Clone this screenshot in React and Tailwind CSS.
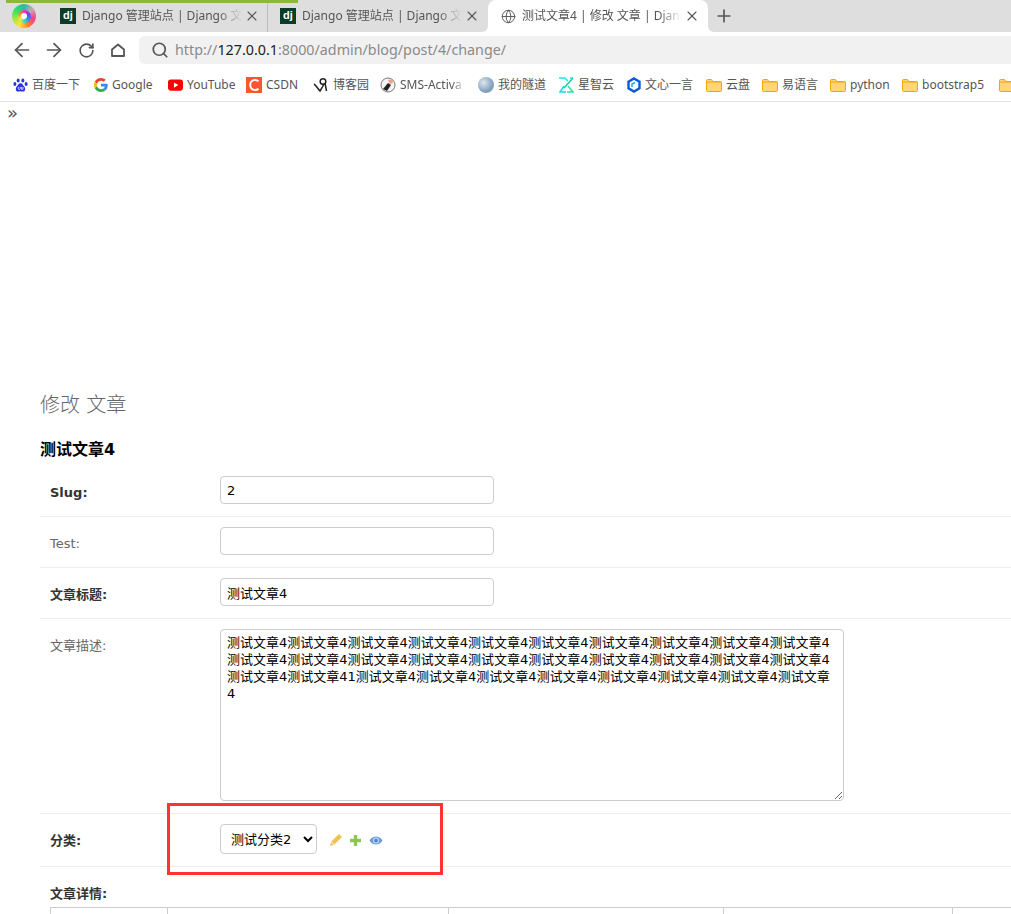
import React from 'react'
import { ArrowLeft, ArrowRight, RotateCw, Search, X, Plus, Globe } from 'lucide-react'

const Folder = () => (
    <svg width="16" height="16" viewBox="0 0 16 16" className="shrink-0">
        <path d="M.5 3.500a1 1 0 0 1 1-1h4l1.500 2h7.500a1 1 0 0 1 1 1v8a1 1 0 0 1-1 1h-13a1 1 0 0 1-1-1z" fill="#ffd577" stroke="#f2a60c" />
        <path d="M1 5h14" stroke="#f2a60c" />
    </svg>
)

const Baidu = () => (
    <svg width="15" height="16" viewBox="0 0 16 16" className="shrink-0" fill="#2932e1">
        <ellipse cx="5.500" cy="3.200" rx="1.600" ry="2.200" />
        <ellipse cx="10.500" cy="3.200" rx="1.600" ry="2.200" />
        <ellipse cx="2" cy="7" rx="1.600" ry="2.100" />
        <ellipse cx="14" cy="7" rx="1.600" ry="2.100" />
        <path d="M8 6c-2 0-2.500 2-4 3.500S2.500 15 5.500 15c1 0 1.500-.4 2.500-.4s1.500.4 2.500.4c3 0 3-4 1.500-5.500S10 6 8 6z" />
        <path d="M5.700 10v2c0 1 2 1 2 0v-2M9 10v2.500h1.700V10" fill="none" stroke="#fff" strokeWidth=".8" />
    </svg>
)

const GoogleIcon = () => (
    <svg width="14" height="14" viewBox="0 0 48 48" className="shrink-0">
        <path fill="#ea4335" d="M24 9.500c3.500 0 6.700 1.200 9.200 3.600l6.900-6.900C35.900 2.400 30.500 0 24 0 14.600 0 6.500 5.400 2.600 13.200l8 6.200C12.500 13.700 17.800 9.500 24 9.500z" />
        <path fill="#4285f4" d="M47 24.500c0-1.600-.1-3.100-.4-4.500H24v9h12.900c-.6 3-2.200 5.500-4.700 7.200l7.700 6C44.400 38 47 31.800 47 24.500z" />
        <path fill="#fbbc05" d="M10.600 28.600c-.5-1.400-.8-3-.8-4.600s.3-3.200.8-4.600l-8-6.200C.9 16.500 0 20.100 0 24s.9 7.500 2.600 10.800z" />
        <path fill="#34a853" d="M24 48c6.500 0 11.900-2.100 15.900-5.800l-7.700-6c-2.200 1.400-4.900 2.300-8.200 2.300-6.200 0-11.500-4.200-13.400-9.900l-8 6.200C6.500 42.600 14.600 48 24 48z" />
    </svg>
)

const YouTubeIcon = () => (
    <svg width="15" height="16" viewBox="0 0 16 16" className="shrink-0">
        <rect x="0" y="2" width="16" height="12" rx="3" fill="#f00" />
        <path d="M6.300 5.200v5.600L11 8z" fill="#fff" />
    </svg>
)

const CsdnIcon = () => (
    <svg width="16" height="16" viewBox="0 0 16 16" className="shrink-0">
        <rect width="16" height="16" fill="#fc5531" />
        <path d="M12.500 4.300C11.500 3.300 10 3 9 3c-3 0-4.800 2.200-4.800 5s1.800 5 4.800 5c1 0 2.500-.3 3.500-1.300" fill="none" stroke="#fff" strokeWidth="2" />
    </svg>
)

const CnblogsIcon = () => (
    <svg width="16" height="16" viewBox="0 0 16 16" className="shrink-0" fill="none" stroke="#222" strokeWidth="1.500">
        <circle cx="10" cy="4.500" r="2.800" />
        <path d="M1 7c2 1 4 5 6 7 2-3 3-5 4-7M12 6l1.500 8" />
    </svg>
)

const SmsIcon = () => (
    <svg width="16" height="16" viewBox="0 0 16 16" className="shrink-0">
        <circle cx="8" cy="8" r="7" fill="#f4f4f4" stroke="#777" />
        <path d="M3 12l5-6 3 2-4 6z" fill="#222" />
        <path d="M8 3l4-1 1 4-3 1z" fill="#f0a080" />
    </svg>
)

const GlobeBall = () => (
    <div className="w-4 h-4 shrink-0 rounded-full bg-[radial-gradient(circle_at_35%_35%,#dfe7ee,#7d9cbc_65%,#a9b9c9)]"></div>
)

const XingzhiIcon = () => (
    <svg width="16" height="16" viewBox="0 0 16 16" className="shrink-0" fill="none" strokeWidth="1.500">
        <path d="M1 1h6l3 3" stroke="#1fe3e8" />
        <path d="M15 1l-9 10" stroke="#1cc6a0" />
        <path d="M12 1h3" stroke="#1fe3e8" />
        <path d="M6 9l-4 6h6" stroke="#11d9f0" />
        <path d="M10 9l5 6H9" stroke="#22e59a" />
    </svg>
)

const WenxinIcon = () => (
    <svg width="14" height="16" viewBox="0 0 14 16" className="shrink-0" fill="none">
        <path d="M7 1.500l5.500 3.200v6.600L7 14.500l-5.500-3.200V4.700z" stroke="#0a5bd3" strokeWidth="2.400" />
        <path d="M5 10V7l3-1.500" stroke="#22a7f0" strokeWidth="1.500" />
    </svg>
)

const DjIcon = () => (
    <div className="w-4 h-4 shrink-0 bg-[#0c3c26] flex items-center justify-center text-white text-[11px] leading-none font-bold font-['Liberation_Sans',sans-serif] pb-[2px]">dj</div>
)

const bookmarks = [
    { icon: <Baidu />, label: '百度一下', cls: 'w-[81px]' },
    { icon: <GoogleIcon />, label: 'Google', cls: 'w-[74px]' },
    { icon: <YouTubeIcon />, label: 'YouTube', cls: 'w-[78px]' },
    { icon: <CsdnIcon />, label: 'CSDN', cls: 'w-[67px]' },
    { icon: <CnblogsIcon />, label: '博客园', cls: 'w-[67px]' },
    { icon: <SmsIcon />, label: 'SMS-Activa', cls: 'w-[98px]', fade: true },
    { icon: <GlobeBall />, label: '我的隧道', cls: 'w-[80px]' },
    { icon: <XingzhiIcon />, label: '星智云', cls: 'w-[69px]' },
    { icon: <WenxinIcon />, label: '文心一言', cls: 'w-[79px]' },
    { icon: <Folder />, label: '云盘', cls: 'w-[56px]' },
    { icon: <Folder />, label: '易语言', cls: 'w-[68px]' },
    { icon: <Folder />, label: 'python', cls: 'w-[72px]' },
    { icon: <Folder />, label: 'bootstrap5', cls: 'w-[97px]' },
    { icon: <Folder />, label: '', cls: 'w-[20px]' },
]

const Tab = ({ title, icon, cls }) => (
    <div className={`flex items-center h-full shrink-0 ${cls}`}>
        {icon}
        <span className="ml-[6px] w-[160px] overflow-hidden whitespace-nowrap text-[12px] text-[#555] [mask-image:linear-gradient(to_right,black_85%,transparent)]">{title}</span>
        <X size={16} strokeWidth={1.600} className="text-[#555] ml-[2px] shrink-0" />
    </div>
)

const Row = ({ label, required, children }) => (
    <div className="flex border-b border-[#eee] pt-[10px] pb-[12px]">
        <label className={`w-[170px] pl-[10px] shrink-0 box-content pt-[9px] text-[13px] leading-4 ${required ? 'font-bold text-[#333]' : 'text-[#666]'}`}>{label}</label>
        {children}
    </div>
)

const inputCls = "w-[274px] h-[28px] border border-[#ccc] rounded-[4px] px-[6px] text-[13px] text-black outline-none bg-white"

const article = '测试文章4'.repeat(21) + '测试文章41' + '测试文章4'.repeat(8)

export default function App() {
    return (
        <div className="relative h-[914px] overflow-hidden bg-white font-['DejaVu_Sans','Noto_Sans_CJK_SC',sans-serif]">
            {/* browser tabs */}
            <div className="font-['Noto_Sans','Noto_Sans_CJK_SC',sans-serif]">
                <div className="relative flex h-[32px] bg-white">
                    <div className="absolute left-[6px] top-0 w-[292px] h-[3px] bg-[#8cb63f]"></div>
                    <div className="flex w-[488px] bg-[#dedede] rounded-br-md items-center pl-[12px]">
                        <div className="relative w-[24px] h-[24px] shrink-0 mr-[24px] rounded-full blur-[0.5px] bg-[conic-gradient(#2fb6a5,#c9a8b0,#f43f8e,#ff7a2e,#ffe23a,#9be83a,#2fe06a,#2fb6a5)] flex items-center justify-center">
                            <div className="w-[13px] h-[13px] rounded-full bg-[conic-gradient(#ff2bc0,#7a3cf0,#2a8cf0,#35e0c0,#ffe640,#ff8a20,#ff2bc0)] flex items-center justify-center">
                                <div className="w-[6px] h-[6px] rounded-full bg-white"></div>
                            </div>
                        </div>
                        <Tab title="Django 管理站点 | Django 文档" icon={<DjIcon />} cls="w-[208px] border-r border-[#bbb] h-[18px]" />
                        <Tab title="Django 管理站点 | Django 文档" icon={<DjIcon />} cls="pl-[12px]" />
                    </div>
                    <div className="w-[220px] bg-[#dedede]">
                        <div className="h-full bg-white rounded-t-lg flex items-center pl-[13px]">
                            <Globe size={15} strokeWidth={1.500} className="text-[#555] shrink-0" />
                            <span className="ml-[6px] w-[160px] overflow-hidden whitespace-nowrap text-[12px] text-[#555] [mask-image:linear-gradient(to_right,black_85%,transparent)]">测试文章4 | 修改 文章 | Django 站点管理</span>
                            <X size={16} strokeWidth={1.600} className="text-[#555] ml-[2px] shrink-0" />
                        </div>
                    </div>
                    <div className="flex-1 bg-[#dedede] rounded-bl-md flex items-center pl-[6px]">
                        <Plus size={20} strokeWidth={2} className="text-[#555]" />
                    </div>
                </div>

                {/* toolbar */}
                <div className="flex items-center h-[32px] pt-[4px] pl-[6px]">
                    <div className="w-[32px] flex justify-center"><ArrowLeft size={22} strokeWidth={1.900} className="text-[#555]" /></div>
                    <div className="w-[32px] flex justify-center"><ArrowRight size={22} strokeWidth={1.900} className="text-[#555]" /></div>
                    <div className="w-[32px] flex justify-center"><RotateCw size={17} strokeWidth={2.300} className="text-[#555]" /></div>
                    <div className="w-[32px] flex justify-center">
                        <svg width="16" height="16" viewBox="0 0 16 16" fill="none" stroke="#555" strokeWidth="1.800" strokeLinejoin="round">
                            <path d="M2 7.500L8 2.500l6 5V14H2z" />
                        </svg>
                    </div>
                    <div className="flex-1 flex items-center h-[28px] ml-[5px] bg-[#f1f1f1] rounded-l-[6px] pl-[12px]">
                        <Search size={18} strokeWidth={2.300} className="text-[#555]" />
                        <span className="ml-[6px] text-[14.3px] text-[#8a8a8a] whitespace-nowrap">http://<span className="text-[#222]">127.0.0.1</span>:8000/admin/blog/post/4/change/</span>
                    </div>
                </div>

                {/* bookmarks */}
                <div className="flex items-center h-[38px] pl-[13px] pt-[4px] border-b border-[#e3e3e3] overflow-hidden">
                    {bookmarks.map((b, i) => (
                        <div key={i} className={`flex items-center shrink-0 gap-[4px] overflow-hidden ${b.cls}`}>
                            {b.icon}
                            {b.label && (
                                <span className={`text-[12px] text-[#555] whitespace-nowrap ${b.fade ? 'w-[65px] overflow-hidden [mask-image:linear-gradient(to_right,black_80%,transparent)]' : ''}`}>{b.label}</span>
                            )}
                        </div>
                    ))}
                </div>
            </div>

            {/* sidebar toggle */}
            <div className="pl-[7px] h-[22px] text-[18px] leading-[22px] text-[#555]">»</div>

            {/* content */}
            <div className="pl-10 mt-[267px]">
                <h1 className="text-[20px] leading-[28px] font-light text-[#666]">修改 文章</h1>
                <h2 className="mt-[21px] text-[16px] leading-[20px] font-bold text-black">测试文章4</h2>

                <div className="mt-[6px]">
                    <Row label="Slug:" required>
                        <input className={inputCls} value="2" readOnly />
                    </Row>
                    <Row label="Test:">
                        <input className={inputCls} value="" readOnly />
                    </Row>
                    <Row label="文章标题:" required>
                        <input className={inputCls} value="测试文章4" readOnly />
                    </Row>
                    <Row label="文章描述:">
                        <textarea
                            className="w-[624px] h-[172px] border border-[#ccc] rounded-[4px] px-[6px] py-[5px] text-[13px] leading-[16.9px] text-black outline-none block bg-white"
                            value={article}
                            readOnly
                        />
                    </Row>
                    <Row label="分类:" required>
                        <div className="flex items-center">
                            <select className="w-[97px] h-[30px] border border-[#ccc] rounded-[4px] pl-[6px] text-[13px] text-black bg-white outline-none">
                                <option>测试分类2</option>
                            </select>
                            <svg width="12" height="12" viewBox="1 1 10 10" className="ml-[13px] mt-[2px]">
                                <path d="M8.500 1l2.500 2.500-6.500 6.500L1 11l1-3.500z" fill="#f0c050" />
                                <path d="M2 7.500L4.500 10" stroke="#fff" strokeWidth=".8" />
                            </svg>
                            <svg width="11" height="11" viewBox="1 1 10 10" className="ml-[8px] mt-[2px]">
                                <path d="M4.500 1h3v3.500H11v3H7.500V11h-3V7.500H1v-3h3.500z" fill="#8cc850" />
                            </svg>
                            <svg width="14" height="11" viewBox="0 1 14 10" className="ml-[8px] mt-[2px]">
                                <path d="M.5 6C2 3.500 4.500 2 7 2s5 1.500 6.500 4C12 8.500 9.500 10 7 10S2 8.500.5 6z" fill="#6a9bd8" />
                                <circle cx="7" cy="6" r="3" fill="#d6e4f5" />
                                <circle cx="7" cy="6" r="2" fill="#4f86c9" />
                            </svg>
                        </div>
                    </Row>
                </div>

                <div className="pt-[19px] pl-[10px]">
                    <label className="block text-[13px] leading-4 font-bold text-[#333]">文章详情:</label>
                    <div className="flex mt-[5px] h-[40px] border-t border-l border-[#ccc]">
                        <div className="w-[117px] border-r border-[#ccc]"></div>
                        <div className="w-[281px] border-r border-[#ccc]"></div>
                        <div className="w-[275px] border-r border-[#ccc]"></div>
                        <div className="w-[229px] border-r border-[#ccc]"></div>
                    </div>
                </div>
            </div>

            {/* red annotation box */}
            <div className="absolute left-[167px] top-[803px] w-[276px] h-[72px] border-[3px] border-[#ff3333]"></div>
        </div>
    )
}
